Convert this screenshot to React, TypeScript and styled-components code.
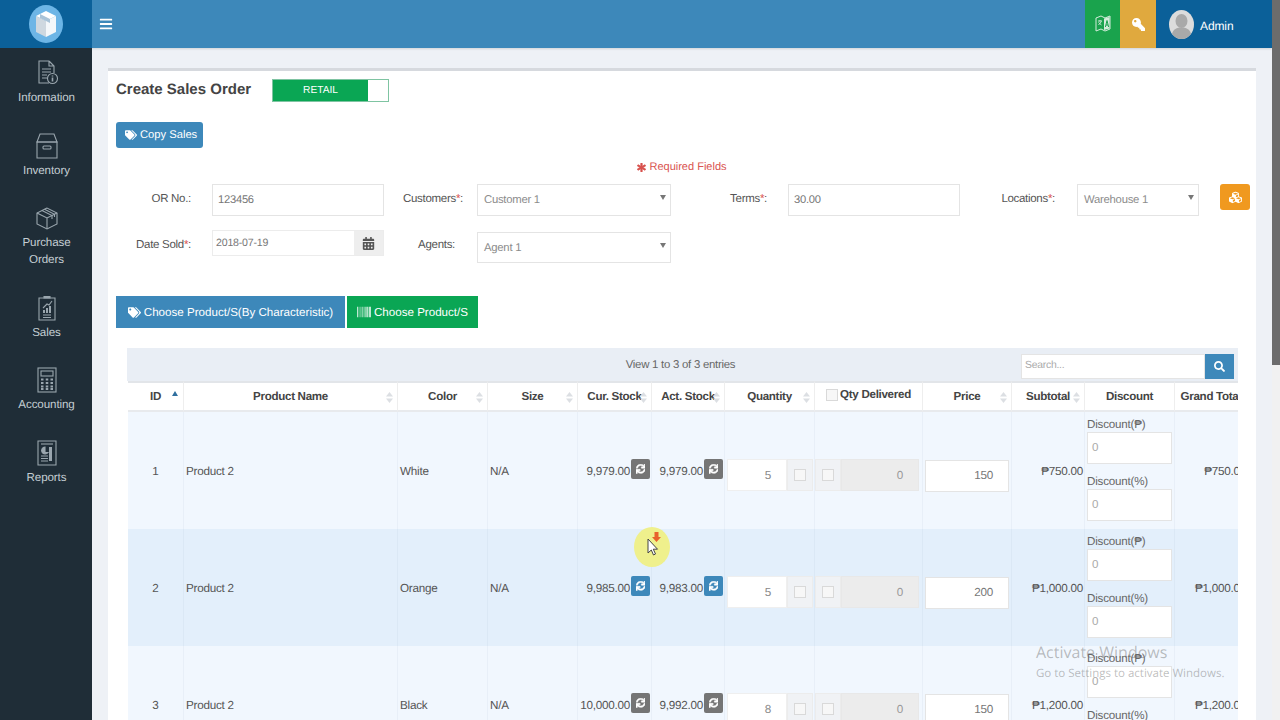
import { FC, ReactNode } from 'react';
import styled, { createGlobalStyle } from 'styled-components';
import { FaAsterisk, FaBars, FaBarcode, FaCalendarAlt, FaCubes, FaKey, FaSearch, FaSync, FaTags } from 'react-icons/fa';

const GlobalStyle = createGlobalStyle`
  html, body {
    margin: 0;
    height: 100%;
    overflow: hidden;
    background: #eef1f6;
  }

  * {
    box-sizing: border-box;
  }

  body, input {
    font-family: "Liberation Sans", "DejaVu Sans", sans-serif;
    font-size: 11.8px;
    color: #555;
    text-rendering: geometricPrecision;
  }
`;

const StyledRoot = styled.div`
  position: relative;
  display: flex;
  width: 1280px;
  height: 720px;
  overflow: hidden;
`;

const StyledFrame = styled.div`
  display: flex;
  flex-direction: column;
  flex: 1;
  min-width: 0;
`;

const StyledScrollTrack = styled.div`
  width: 8px;
  background: #f1f1f1;
`;

const StyledScrollThumb = styled.div`
  height: 365px;
  background: #6c6c6c;
`;

const StyledHeader = styled.header`
  display: flex;
  align-items: stretch;
  flex: none;
  height: 48px;
  background: #3d88ba;
  box-shadow: 0 1px 2px rgba(0, 0, 0, 0.12);
`;

const StyledLogo = styled.div`
  display: flex;
  align-items: center;
  justify-content: center;
  width: 92px;
  background: #0b6099;
`;

const StyledMenuButton = styled.div`
  display: flex;
  align-items: center;
  flex: 1;
  padding-left: 7px;
  color: #fff;
  font-size: 14px;
`;

const StyledHeaderTile = styled.div<{ $bg: string; $width: number }>`
  display: flex;
  align-items: center;
  justify-content: center;
  width: ${(p) => p.$width}px;
  background: ${(p) => p.$bg};
  color: #fff;
`;

const StyledKey = styled(FaKey)`
  transform: scaleX(-1);
`;

const StyledUser = styled.div`
  display: flex;
  align-items: center;
  gap: 6px;
  width: 116px;
  padding-left: 13px;
  background: #0b6099;
  color: #fff;
  font-size: 12px;
  letter-spacing: -0.1px;
`;

const StyledUserName = styled.span`
  margin-top: 3px;
`;

const StyledMain = styled.div`
  display: flex;
  flex: 1;
  min-height: 0;
  overflow: hidden;
`;

const StyledSidebar = styled.nav`
  flex: none;
  width: 92px;
  padding-left: 1px;
  background: #1f2d37;
`;

const StyledNavItem = styled.div`
  display: flex;
  flex-direction: column;
  align-items: center;
  padding: 12px 0 14.5px;
  color: #c4cdd3;
  font-size: 11.6px;
  letter-spacing: -0.1px;
  line-height: 17px;
  text-align: center;
`;

const StyledNavIcon = styled.svg`
  display: block;
  width: 26px;
  height: 26px;
  margin-bottom: 3px;
  fill: none;
  stroke: #9aa6ae;
  stroke-width: 1.1;
`;

const StyledContent = styled.main`
  flex: 1;
  min-width: 0;
  padding: 20px 16px 0;
`;

const StyledPanel = styled.section`
  height: 700px;
  padding: 8px 18px 0 8px;
  border-top: 3px solid #d6d9de;
  background: #fff;
  overflow: hidden;
`;

const StyledTitleRow = styled.div`
  display: flex;
  align-items: center;
  gap: 20px;
  height: 23px;
`;

const StyledTitle = styled.h1`
  width: 136px;
  margin: 0;
  padding-bottom: 2px;
  color: #444;
  font-size: 15px;
  font-weight: 700;
  white-space: nowrap;
`;

const StyledToggle = styled.div`
  display: flex;
  width: 117px;
  height: 23px;
  border: 1px solid #7fc4a2;
`;

const StyledToggleLabel = styled.span`
  width: 95px;
  background: #0aa654;
  color: #fff;
  font-size: 10.2px;
  line-height: 22px;
  text-align: center;
`;

const StyledButton = styled.div<{ $bg: string }>`
  display: inline-flex;
  align-items: center;
  gap: 3px;
  background: ${(p) => p.$bg};
  color: #fff;
  font-size: 11.6px;
  white-space: nowrap;
`;

const StyledCopyButton = styled(StyledButton)`
  width: 87px;
  height: 26px;
  margin-top: 20px;
  padding: 0 0 0 9px;
  border-radius: 3px;
  font-size: 11.2px;
`;

const StyledRequired = styled.div`
  display: flex;
  align-items: center;
  justify-content: center;
  gap: 3px;
  height: 17px;
  margin-top: 10.5px;
  padding-left: 10px;
  color: #d9534f;
  font-size: 11px;
`;

const StyledAsterisk = styled(FaAsterisk)`
  stroke: currentColor;
  stroke-width: 40px;
`;

const StyledFormGrid = styled.div`
  display: grid;
  grid-template-columns: 96px 172px 93px 194px 117px 172px 117px 122px 21px 30px;
  grid-template-rows: 32px 33px;
  row-gap: 14px;
  margin-top: 8.5px;
`;

const StyledLabel = styled.label<{ $pad: number }>`
  padding: 9px ${(p) => p.$pad}px 0 0;
  color: #555;
  font-size: 11.5px;
  letter-spacing: -0.3px;
  text-align: right;
  white-space: nowrap;
`;

const StyledAgentsLabel = styled(StyledLabel)`
  grid-column: 3;
`;

const StyledRequiredMark = styled.span`
  color: #d9534f;
`;

const StyledInput = styled.input`
  width: 100%;
  height: 100%;
  padding: 0 4px 0 5px;
  border: 1px solid #e4e4e4;
  border-radius: 0;
  outline: none;
  background: #fff;
  color: #777;
  font-size: 11.2px;
  letter-spacing: -0.25px;
`;

const StyledDateGroup = styled.div`
  display: flex;
  height: 26px;
  border: 1px solid #ececec;
`;

const StyledDateInput = styled(StyledInput)`
  flex: 1;
  min-width: 0;
  padding: 0 3px;
  border: 0;
  font-size: 10.6px;
  letter-spacing: -0.2px;
`;

const StyledDateAddon = styled.div`
  display: flex;
  align-items: center;
  justify-content: center;
  flex: none;
  width: 29px;
  background: #eee;
  color: #555;
  font-size: 13px;
`;

const StyledSelect = styled.div`
  position: relative;
  height: 100%;
  padding: 9px 6px 0;
  border: 1px solid #e4e4e4;
  color: #8c8c8c;
  font-size: 11.3px;
  letter-spacing: -0.25px;
`;

const StyledAgentSelect = styled(StyledSelect)`
  height: 31px;
  margin-top: 2px;
`;

const StyledCaret = styled.span`
  position: absolute;
  top: 10px;
  right: 4px;
  border-top: 5px solid #777;
  border-right: 3.5px solid transparent;
  border-left: 3.5px solid transparent;
`;

const StyledCubeButton = styled.div`
  display: flex;
  align-items: center;
  justify-content: center;
  height: 26px;
  border-radius: 3px;
  background: #f0991f;
  color: #fff;
  font-size: 13px;
`;

const StyledChooseRow = styled.div`
  display: flex;
  gap: 2px;
  margin-top: 33px;
`;

const StyledChooseButton = styled(StyledButton)<{ $width: number }>`
  justify-content: center;
  width: ${(p) => p.$width}px;
  height: 32px;
`;

const StyledTableBlock = styled.div`
  width: 1111px;
  margin: 20px 0 0 11px;
`;

const StyledToolbar = styled.div`
  display: grid;
  grid-template-columns: 1fr auto 1fr;
  align-items: center;
  height: 33px;
  padding-right: 4px;
  background: #e9eef5;
  color: #666;
  font-size: 11.4px;
  letter-spacing: -0.25px;
`;

const StyledEntries = styled.span`
  grid-column: 2;
`;

const StyledSearch = styled.div`
  display: flex;
  grid-column: 3;
  justify-self: end;
  height: 25px;
  margin-top: 3px;
`;

const StyledSearchInput = styled.div`
  width: 184px;
  padding: 5px 3px;
  border: 1px solid #e4e4e4;
  background: #fff;
  color: #aaa;
  font-size: 10.4px;
`;

const StyledSearchButton = styled.div`
  display: flex;
  align-items: center;
  justify-content: center;
  width: 29px;
  background: #3d88ba;
  color: #fff;
  font-size: 11px;
`;

const StyledTableClip = styled.div`
  overflow: hidden;
  padding-left: 1px;
`;

const StyledTable = styled.table`
  width: 1120px;
  border-collapse: separate;
  border-spacing: 0;
  table-layout: fixed;
`;

const StyledHeadCell = styled.th`
  position: relative;
  height: 31px;
  padding: 0 0 1px;
  border-top: 2px solid #e2e5e9;
  border-right: 1px solid #eee;
  border-bottom: 2px solid #e8eaed;
  background: #fff;
  color: #444;
  font-size: 11.6px;
  font-weight: 700;
  letter-spacing: -0.3px;
  white-space: nowrap;
`;

const StyledSort = styled.svg`
  position: absolute;
  top: 9px;
  right: 4px;
  width: 7px;
  height: 11px;
`;

const StyledIdSort = styled.span`
  position: absolute;
  top: 8px;
  right: 5px;
  border-right: 3.5px solid transparent;
  border-bottom: 5px solid #2f6f9f;
  border-left: 3.5px solid transparent;
`;

const StyledHeadCheck = styled.span`
  display: inline-flex;
  align-items: center;
  gap: 2px;
  margin-top: -3px;
  vertical-align: middle;
`;

const StyledRow = styled.tr<{ $even: boolean }>`
  background: ${(p) => (p.$even ? '#e3effb' : '#f1f7fe')};
`;

const StyledCell = styled.td<{ $align?: string; $pad?: number }>`
  height: 117px;
  padding: 2px ${(p) => (p.$align === 'right' ? p.$pad ?? 1 : 0)}px 0 ${(p) => (p.$align === 'left' ? p.$pad ?? 2 : 0)}px;
  border-right: 1px solid rgba(120, 140, 170, 0.07);
  color: #555;
  font-size: 11.7px;
  letter-spacing: -0.25px;
  text-align: ${(p) => p.$align ?? 'center'};
  white-space: nowrap;
  overflow: hidden;
`;

const StyledStock = styled.div`
  display: flex;
  align-items: center;
  justify-content: flex-end;
  gap: 1px;
  padding-right: 1px;
`;

const StyledRefresh = styled.span<{ $active: boolean }>`
  display: flex;
  align-items: center;
  justify-content: center;
  width: 19px;
  height: 20px;
  margin-top: -5px;
  border-radius: 2px;
  background: ${(p) => (p.$active ? '#3d88ba' : '#757575')};
  color: #fff;
  font-size: 9.5px;
`;

const StyledRefreshIcon = styled(FaSync)`
  stroke: currentColor;
  stroke-width: 30px;
`;

const StyledInputGroup = styled.div<{ $reverse?: boolean }>`
  display: flex;
  height: 32px;
  margin: 6px ${(p) => (p.$reverse ? 3 : 1)}px 0 ${(p) => (p.$reverse ? 0 : 2)}px;
`;

const StyledQtyValue = styled.div<{ $disabled?: boolean }>`
  flex: 1;
  padding: 9px 15px 0 0;
  border: 1px solid ${(p) => (p.$disabled ? '#e8e8e8' : '#efefef')};
  background: ${(p) => (p.$disabled ? '#ececec' : '#fff')};
  color: ${(p) => (p.$disabled ? '#999' : '#888')};
  font-size: 11.7px;
  text-align: right;
`;

const StyledAddon = styled.div`
  display: flex;
  align-items: center;
  justify-content: center;
  flex: none;
  width: 26px;
  border: 1px solid #ececec;
  background: #f0f2f5;
`;

const StyledCheckbox = styled.span`
  display: block;
  flex: none;
  width: 12px;
  height: 12px;
  border: 1px solid #d9d9d9;
  background: #f7f7f7;
`;

const StyledPriceValue = styled.div`
  height: 32px;
  margin: 9px 2px 0 2px;
  padding: 8px 15px 0 0;
  border: 1px solid #e4e4e4;
  background: #fff;
  color: #777;
  text-align: right;
`;

const StyledDiscountLabel = styled.div`
  height: 16px;
  line-height: 15px;
  color: #666;
`;

const StyledDiscountStack = styled.div`
  display: flex;
  flex-direction: column;
  padding: 4.5px 0 0 2px;
  height: 117px;
  overflow: hidden;
`;

const StyledDiscountInput = styled.div`
  width: 85px;
  height: 32px;
  flex: none;
  margin-bottom: 10.5px;
  padding: 8px 4px;
  border: 1px solid #e4e4e4;
  background: #fff;
  color: #aaa;
`;

const StyledDiscountCell = styled.td`
  height: 117px;
  padding: 0;
  border-right: 1px solid rgba(120, 140, 170, 0.07);
  font-size: 11.6px;
  letter-spacing: -0.2px;
  vertical-align: top;
`;

const StyledWatermark = styled.div`
  position: absolute;
  top: 640px;
  left: 1036px;
  color: rgba(110, 110, 110, 0.45);
  font-family: "Open Sans", sans-serif;
  pointer-events: none;
`;

const StyledWatermarkTitle = styled.div`
  font-size: 16px;
  line-height: 24px;
`;

const StyledWatermarkText = styled.div`
  font-size: 11.5px;
  line-height: 20px;
`;

const StyledCursor = styled.svg`
  position: absolute;
  top: 526px;
  left: 633px;
  width: 40px;
  height: 42px;
  pointer-events: none;
`;

const columns = [56, 214, 90, 90, 74, 73, 90, 108, 89, 73, 90, 73];

const rows = [
  { id: 1, color: 'White', cur: '9,979.00', act: '9,979.00', qty: 5, price: 150, sub: '₱750.00', active: false },
  { id: 2, color: 'Orange', cur: '9,985.00', act: '9,983.00', qty: 5, price: 200, sub: '₱1,000.00', active: true },
  { id: 3, color: 'Black', cur: '10,000.00', act: '9,992.00', qty: 8, price: 150, sub: '₱1,200.00', active: false },
];

const SortIcon: FC = () => (
  <StyledSort viewBox="0 0 7 11">
    <path d="M3.5 0 7 4.5H0z" fill="#dcdfe3" />
    <path d="M3.5 11 0 6.5h7z" fill="#dcdfe3" />
  </StyledSort>
);

const LogoIcon: FC = () => (
  <svg width="36" height="40" viewBox="0 0 36 40">
    <ellipse cx="18" cy="20" rx="17" ry="19" fill="#6db5e6" />
    <path d="M18 7 28 12 18 17 8 12z" fill="#fff" />
    <path d="M8 12 18 17V33L8 28z" fill="#cfd8e0" />
    <path d="M28 12 18 17V33L28 28z" fill="#f4f7fa" />
    <path d="M12 10 22 15V19L12 14z" fill="#a9c3d8" />
  </svg>
);

const LanguageIcon: FC = () => (
  <svg width="16" height="18" viewBox="0 0 16 18">
    <path d="M1 3 6 1l4 2 5-2v13l-5 2-4-2-5 2z" fill="none" stroke="#d5ecdc" strokeWidth="1" />
    <path d="M9 3.5 14.5 2v11.500L9 15z" fill="#d5ecdc" />
    <path d="M3 6h4M5 5v1.500M3.500 10 6.500 6.500M3.500 7.500 6.500 10" stroke="#d5ecdc" strokeWidth="0.9" fill="none" />
    <path d="M10.400 12 12 5.500 13.600 12M11 10h2" stroke="#1aa34d" strokeWidth="1" fill="none" />
  </svg>
);

const AvatarIcon: FC = () => (
  <svg width="25" height="29" viewBox="0 0 25 29">
    <ellipse cx="12.5" cy="14.5" rx="12.5" ry="14.5" fill="#dcdcdc" />
    <ellipse cx="12.5" cy="11" rx="6" ry="7" fill="#a9a9a9" />
    <path d="M3 24c1-5 5-6.500 9.500-6.500S21 19 22 24c-2.400 3-5.700 5-9.500 5S5.400 27 3 24z" fill="#a9a9a9" />
  </svg>
);

const navItems: { label: ReactNode; key: string; icon: ReactNode }[] = [
  {
    key: 'info',
    label: 'Information',
    icon: (
      <>
        <path d="M15 1H5v22h10M15 1l5 5v7M15 1v5h5" />
        <path d="M8 9h9M8 12h9M8 15h5M8 18h5" />
        <circle cx="18.500" cy="18.500" r="5" />
        <path d="M18.500 17.500v4M18.500 15.500v1" strokeWidth="1.6" />
      </>
    ),
  },
  {
    key: 'inv',
    label: 'Inventory',
    icon: (
      <>
        <path d="M6 1h14l3 8H3z" />
        <path d="M3 9h20v16H3z" />
        <rect x="9" y="13" width="8" height="3" rx="1" />
      </>
    ),
  },
  {
    key: 'po',
    label: (
      <>
        Purchase
        <br />
        Orders
      </>
    ),
    icon: (
      <>
        <path d="M13 3 3 8v11l10 5 10-5V8z" />
        <path d="M3 8l10 5 10-5M13 13v11" />
        <path d="M8 5.500l10 5V14M10.500 4.300l10 5V12" />
      </>
    ),
  },
  {
    key: 'sales',
    label: 'Sales',
    icon: (
      <>
        <path d="M5 3h16v22H5z" />
        <path d="M10 3V1.500h6V3z" fill="#9aa6ae" />
        <path d="M9 20h8M9 22.500h8" />
        <path d="M10 18v-3M13 18v-5M16 18v-7" strokeWidth="2" />
        <path d="M9 13l4-4 2 1 3-4" />
      </>
    ),
  },
  {
    key: 'acc',
    label: 'Accounting',
    icon: (
      <>
        <rect x="4" y="1" width="18" height="24" />
        <rect x="7" y="4" width="12" height="5" />
        <path d="M7 12.500h12M7 16h12M7 19.500h12M7 22h12" strokeWidth="1.800" strokeDasharray="2.500 2.250" />
      </>
    ),
  },
  {
    key: 'rep',
    label: 'Reports',
    icon: (
      <>
        <path d="M4 1h18v24H4z" />
        <path d="M7 4h12" />
        <path d="M11 7a3.500 3.500 0 1 0 3 5.500H11z" fill="#9aa6ae" />
        <path d="M16.500 7v14" strokeWidth="3" />
        <path d="M7 16h7M7 18.500h7M7 21h7" />
      </>
    ),
  },
];

const heads = ['ID', 'Product Name', 'Color', 'Size', 'Cur. Stock', 'Act. Stock', 'Quantity'];

const App: FC = () => {
  return (
    <StyledRoot>
      <GlobalStyle />
      <StyledFrame>
        <StyledHeader>
          <StyledLogo>
            <LogoIcon />
          </StyledLogo>
          <StyledMenuButton>
            <FaBars />
          </StyledMenuButton>
          <StyledHeaderTile $bg="#1aa34d" $width={35}>
            <LanguageIcon />
          </StyledHeaderTile>
          <StyledHeaderTile $bg="#e0a93e" $width={36}>
            <StyledKey size={13} />
          </StyledHeaderTile>
          <StyledUser>
            <AvatarIcon />
            <StyledUserName>Admin</StyledUserName>
          </StyledUser>
        </StyledHeader>
        <StyledMain>
          <StyledSidebar>
            {navItems.map((item) => (
              <StyledNavItem key={item.key}>
                <StyledNavIcon viewBox="0 0 26 26">{item.icon}</StyledNavIcon>
                <span>{item.label}</span>
              </StyledNavItem>
            ))}
          </StyledSidebar>
          <StyledContent>
            <StyledPanel>
              <StyledTitleRow>
                <StyledTitle>Create Sales Order</StyledTitle>
                <StyledToggle>
                  <StyledToggleLabel>RETAIL</StyledToggleLabel>
                </StyledToggle>
              </StyledTitleRow>
              <StyledCopyButton $bg="#3d88ba">
                <FaTags size={12} />
                Copy Sales
              </StyledCopyButton>
              <StyledRequired>
                <StyledAsterisk size={9} />
                Required Fields
              </StyledRequired>
              <StyledFormGrid>
                <StyledLabel $pad={21}>OR No.:</StyledLabel>
                <StyledInput readOnly value="123456" />
                <StyledLabel $pad={14}>
                  Customers<StyledRequiredMark>*</StyledRequiredMark>:
                </StyledLabel>
                <StyledSelect>
                  Customer 1
                  <StyledCaret />
                </StyledSelect>
                <StyledLabel $pad={21}>
                  Terms<StyledRequiredMark>*</StyledRequiredMark>:
                </StyledLabel>
                <StyledInput readOnly value="30.00" />
                <StyledLabel $pad={22}>
                  Locations<StyledRequiredMark>*</StyledRequiredMark>:
                </StyledLabel>
                <StyledSelect>
                  Warehouse 1
                  <StyledCaret />
                </StyledSelect>
                <span />
                <StyledCubeButton>
                  <FaCubes />
                </StyledCubeButton>
                <StyledLabel $pad={21}>
                  Date Sold<StyledRequiredMark>*</StyledRequiredMark>:
                </StyledLabel>
                <StyledDateGroup>
                  <StyledDateInput readOnly value="2018-07-19" />
                  <StyledDateAddon>
                    <FaCalendarAlt />
                  </StyledDateAddon>
                </StyledDateGroup>
                <StyledAgentsLabel $pad={22}>Agents:</StyledAgentsLabel>
                <StyledAgentSelect>
                  Agent 1
                  <StyledCaret />
                </StyledAgentSelect>
              </StyledFormGrid>
              <StyledChooseRow>
                <StyledChooseButton $bg="#3d88ba" $width={229}>
                  <FaTags size={13} />
                  Choose Product/S(By Characteristic)
                </StyledChooseButton>
                <StyledChooseButton $bg="#0aa654" $width={131}>
                  <FaBarcode size={14} />
                  Choose Product/S
                </StyledChooseButton>
              </StyledChooseRow>
              <StyledTableBlock>
                <StyledToolbar>
                  <StyledEntries>View 1 to 3 of 3 entries</StyledEntries>
                  <StyledSearch>
                    <StyledSearchInput>Search...</StyledSearchInput>
                    <StyledSearchButton>
                      <FaSearch />
                    </StyledSearchButton>
                  </StyledSearch>
                </StyledToolbar>
                <StyledTableClip>
                  <StyledTable>
                    <colgroup>
                      {columns.map((width, index) => (
                        <col key={index} width={width} />
                      ))}
                    </colgroup>
                    <thead>
                      <tr>
                        {heads.map((head, index) => (
                          <StyledHeadCell key={head}>
                            {head}
                            {index === 0 ? <StyledIdSort /> : <SortIcon />}
                          </StyledHeadCell>
                        ))}
                        <StyledHeadCell>
                          <StyledHeadCheck>
                            <StyledCheckbox />
                            Qty Delivered
                          </StyledHeadCheck>
                        </StyledHeadCell>
                        <StyledHeadCell>
                          Price
                          <SortIcon />
                        </StyledHeadCell>
                        <StyledHeadCell>
                          Subtotal
                          <SortIcon />
                        </StyledHeadCell>
                        <StyledHeadCell>Discount</StyledHeadCell>
                        <StyledHeadCell>Grand Total</StyledHeadCell>
                      </tr>
                    </thead>
                    <tbody>
                      {rows.map((row) => (
                        <StyledRow key={row.id} $even={row.id === 2}>
                          <StyledCell>{row.id}</StyledCell>
                          <StyledCell $align="left">Product 2</StyledCell>
                          <StyledCell $align="left">{row.color}</StyledCell>
                          <StyledCell $align="left">N/A</StyledCell>
                          <StyledCell>
                            <StyledStock>
                              {row.cur}
                              <StyledRefresh $active={row.active}>
                                <StyledRefreshIcon />
                              </StyledRefresh>
                            </StyledStock>
                          </StyledCell>
                          <StyledCell>
                            <StyledStock>
                              {row.act}
                              <StyledRefresh $active={row.active}>
                                <StyledRefreshIcon />
                              </StyledRefresh>
                            </StyledStock>
                          </StyledCell>
                          <StyledCell>
                            <StyledInputGroup>
                              <StyledQtyValue>{row.qty}</StyledQtyValue>
                              <StyledAddon>
                                <StyledCheckbox />
                              </StyledAddon>
                            </StyledInputGroup>
                          </StyledCell>
                          <StyledCell>
                            <StyledInputGroup $reverse>
                              <StyledAddon>
                                <StyledCheckbox />
                              </StyledAddon>
                              <StyledQtyValue $disabled>0</StyledQtyValue>
                            </StyledInputGroup>
                          </StyledCell>
                          <StyledCell>
                            <StyledPriceValue>{row.price}</StyledPriceValue>
                          </StyledCell>
                          <StyledCell $align="right">{row.sub}</StyledCell>
                          <StyledDiscountCell>
                            <StyledDiscountStack>
                              <StyledDiscountLabel>Discount(₱)</StyledDiscountLabel>
                              <StyledDiscountInput>0</StyledDiscountInput>
                              <StyledDiscountLabel>Discount(%)</StyledDiscountLabel>
                              <StyledDiscountInput>0</StyledDiscountInput>
                            </StyledDiscountStack>
                          </StyledDiscountCell>
                          <StyledCell $align="right">{row.sub}</StyledCell>
                        </StyledRow>
                      ))}
                    </tbody>
                  </StyledTable>
                </StyledTableClip>
              </StyledTableBlock>
            </StyledPanel>
          </StyledContent>
        </StyledMain>
      </StyledFrame>
      <StyledScrollTrack>
        <StyledScrollThumb />
      </StyledScrollTrack>
      <StyledCursor viewBox="0 0 40 42">
        <ellipse cx="19" cy="21" rx="18" ry="20" fill="#eff08c" />
        <path d="M21.500 6h4v5h2.500l-4.500 5-4.500-5h2.500z" fill="#e8612c" />
        <path d="M15 13v14l3.300-3 2.200 5 2-1-2.200-4.800h4.200z" fill="#fff" stroke="#444" strokeWidth="1" />
      </StyledCursor>
      <StyledWatermark>
        <StyledWatermarkTitle>Activate Windows</StyledWatermarkTitle>
        <StyledWatermarkText>Go to Settings to activate Windows.</StyledWatermarkText>
      </StyledWatermark>
    </StyledRoot>
  );
};

export default App;
